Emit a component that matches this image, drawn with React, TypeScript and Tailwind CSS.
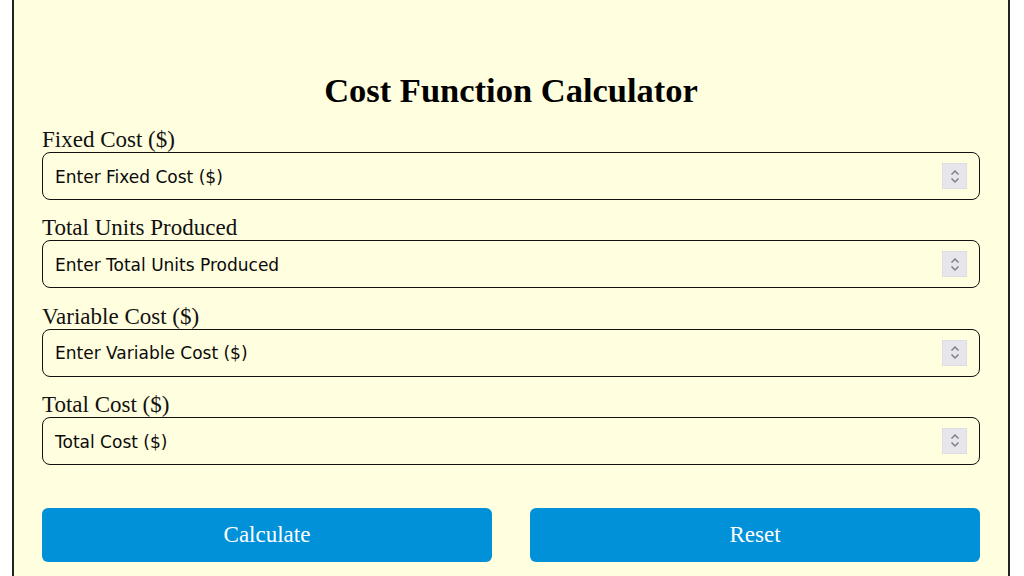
import React from "react";

const fields = [
  { label: "Fixed Cost ($)", placeholder: "Enter Fixed Cost ($)" },
  { label: "Total Units Produced", placeholder: "Enter Total Units Produced" },
  { label: "Variable Cost ($)", placeholder: "Enter Variable Cost ($)" },
  { label: "Total Cost ($)", placeholder: "Total Cost ($)" },
];

function Spinner() {
  return (
    <div className="flex h-[26px] w-[25px] flex-col items-center justify-center gap-[1px] border border-dotted border-[#d4d4dc] bg-[#e6e6ec]">
      <svg width="10" height="7" viewBox="0 0 10 7" fill="none">
        <path d="M1.5 5.5 L5 2 L8.5 5.5" stroke="#7d8088" strokeWidth="1.5" />
      </svg>
      <svg width="10" height="7" viewBox="0 0 10 7" fill="none">
        <path d="M1.5 1.5 L5 5 L8.5 1.5" stroke="#7d8088" strokeWidth="1.5" />
      </svg>
    </div>
  );
}

export default function App() {
  return (
    <div className="min-h-[576px] bg-white">
      <div className="ml-[12px] w-[998px] border-x-2 border-[#222] bg-[#fffede] px-[28px] pt-[70px] pb-[20px] font-['Liberation_Serif',serif]">
        <h1 className="mb-[18px] text-center text-[34.5px] font-bold leading-[40px] text-black">
          Cost Function Calculator
        </h1>
        {fields.map((f) => (
          <div key={f.label} className="mb-[16.3px]">
            <label className="block text-[23px] leading-[24px] text-[#111]">
              {f.label}
            </label>
            <div className="flex h-[48px] items-center justify-between rounded-[8px] border border-[#111] pl-[12px] pr-[12px]">
              <span className="pt-[3px] font-['DejaVu_Sans',sans-serif] text-[17px] text-[#0a0a0a]">
                {f.placeholder}
              </span>
              <Spinner />
            </div>
          </div>
        ))}
        <div className="mt-[43px] flex gap-[38px]">
          <button className="h-[54px] flex-1 rounded-[6px] bg-[#0091d9] text-[23px] text-white">
            Calculate
          </button>
          <button className="h-[54px] flex-1 rounded-[6px] bg-[#0091d9] text-[23px] text-white">
            Reset
          </button>
        </div>
      </div>
    </div>
  );
}
